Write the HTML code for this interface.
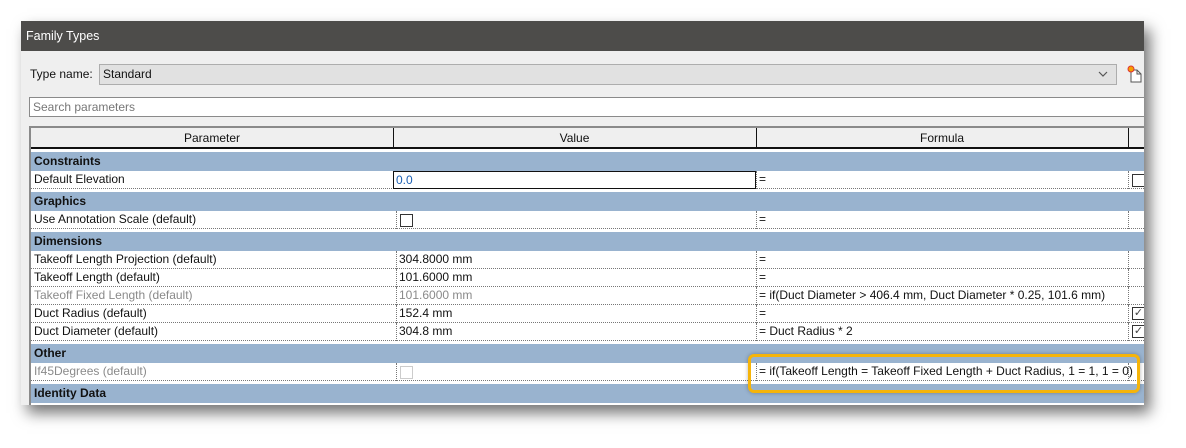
<!DOCTYPE html>
<html><head><meta charset="utf-8"><style>
*{margin:0;padding:0;box-sizing:border-box}
body{width:1186px;height:448px;background:#fff;position:relative;overflow:hidden;font-family:"Liberation Sans",sans-serif;font-size:12px;color:#111}
.win{position:absolute;left:21px;top:21px;width:1123px;height:384px;background:#efefef;box-shadow:6px 8px 14px rgba(0,0,0,.55);overflow:hidden}
.title{position:absolute;left:0;top:0;width:100%;height:30px;background:#4d4c4a;color:#fff;font-size:12.5px;line-height:30px;padding-left:5px}
.a{position:absolute}
.grp{position:absolute;left:10px;width:1113px;height:19px;background:#99b3cf;font-weight:bold;line-height:19px;padding-left:3px;font-size:12px}
.row{position:absolute;left:10px;width:1113px;height:18px;background:#fff;border-bottom:1px dotted #777;line-height:17px}
.row span{position:absolute;top:0;white-space:nowrap}
.c1{left:3px}.c2{left:365px;border-left:1px dotted #777;height:18px;padding-left:2px}.c3{left:725px;border-left:1px dotted #777;height:18px;padding-left:2px}.c4{left:1097px;border-left:1px dotted #777;height:18px}
.cb{position:absolute;width:13px;height:13px;border:1px solid #333;background:#fff}
.gray{color:#8a8a8a}
</style></head><body>
<div class="win">
<div class="title">Family Types</div>
<div class="a" style="left:9px;top:46px;font-size:12px">Type name:</div>
<div class="a" style="left:78px;top:43px;width:1018px;height:21px;background:#e1e1e1;border:1px solid #adadad;padding-left:3px;line-height:19px">Standard
<svg style="position:absolute;right:8px;top:6px" width="10" height="7"><path d="M1 1L5 5L9 1" fill="none" stroke="#555" stroke-width="1.2"/></svg></div>
<svg class="a" style="left:1106px;top:44px" width="17" height="18"><path d="M4 5H10L14 9V17H4Z" fill="#fff" stroke="#555"/><path d="M10 5V9H14" fill="none" stroke="#555"/><circle cx="4" cy="4" r="3" fill="#f5a000" stroke="#d33" stroke-width="1"/></svg>
<div class="a" style="left:8px;top:76px;width:1120px;height:20px;background:#fff;border:1px solid #8a8a8a;padding-left:3px;line-height:18px;color:#777">Search parameters</div>
<div class="a" style="left:8px;top:105px;width:1120px;height:290px;background:#fff;border-left:2px solid #8a8a8a;border-top:2px solid #8a8a8a"></div>
<div class="a" style="left:10px;top:107px;width:1113px;height:21px;background:#efefef;border-bottom:2px solid #111"></div>
<div class="a" style="left:372px;top:107px;width:1px;height:21px;background:#111"></div>
<div class="a" style="left:735px;top:107px;width:1px;height:21px;background:#111"></div>
<div class="a" style="left:1107px;top:107px;width:1px;height:21px;background:#111"></div>
<div class="a" style="left:10px;top:110px;width:362px;text-align:center">Parameter</div>
<div class="a" style="left:372px;top:110px;width:363px;text-align:center">Value</div>
<div class="a" style="left:735px;top:110px;width:372px;text-align:center">Formula</div>

<div class="grp" style="top:131px">Constraints</div>
<div class="row" style="top:150px"><span class="c1">Default Elevation</span><span class="c2" style="border:1px solid #111;width:363px;background:#fff;color:#1a5fb4;left:362px">0.0</span><span class="c3">=</span><span class="c4"><i class="cb" style="left:3px;top:3px"></i></span></div>
<div class="grp" style="top:171px">Graphics</div>
<div class="row" style="top:190px"><span class="c1">Use Annotation Scale (default)</span><span class="c2"><i class="cb" style="left:3px;top:3px"></i></span><span class="c3">=</span><span class="c4"></span></div>
<div class="grp" style="top:211px">Dimensions</div>
<div class="row" style="top:230px"><span class="c1">Takeoff Length Projection (default)</span><span class="c2">304.8000 mm</span><span class="c3">=</span><span class="c4"></span></div>
<div class="row" style="top:248px"><span class="c1">Takeoff Length (default)</span><span class="c2">101.6000 mm</span><span class="c3">=</span><span class="c4"></span></div>
<div class="row gray" style="top:266px"><span class="c1">Takeoff Fixed Length (default)</span><span class="c2">101.6000 mm</span><span class="c3" style="color:#111">= if(Duct Diameter &gt; 406.4 mm, Duct Diameter * 0.25, 101.6 mm)</span><span class="c4"></span></div>
<div class="row" style="top:284px"><span class="c1">Duct Radius (default)</span><span class="c2">152.4 mm</span><span class="c3">=</span><span class="c4"><i class="cb" style="left:3px;top:2px;color:#444;font-style:normal;font-size:11px;line-height:11px;text-align:center">✓</i></span></div>
<div class="row" style="top:302px"><span class="c1">Duct Diameter (default)</span><span class="c2">304.8 mm</span><span class="c3">= Duct Radius * 2</span><span class="c4"><i class="cb" style="left:3px;top:2px;color:#444;font-style:normal;font-size:11px;line-height:11px;text-align:center">✓</i></span></div>
<div class="grp" style="top:323px">Other</div>
<div class="row gray" style="top:342px"><span class="c1">If45Degrees (default)</span><span class="c2"><i class="cb" style="left:3px;top:3px;border-color:#ccc"></i></span><span class="c3" style="color:#111">= if(Takeoff Length = Takeoff Fixed Length + Duct Radius, 1 = 1, 1 = 0)</span><span class="c4"></span></div>
<div class="grp" style="top:363px">Identity Data</div>
</div>
<div class="a" style="left:748px;top:354px;width:392px;height:39px;border:3px solid #f5b40a;border-radius:6px;box-shadow:0 0 4px rgba(0,0,0,.3)"></div>
</body></html>
